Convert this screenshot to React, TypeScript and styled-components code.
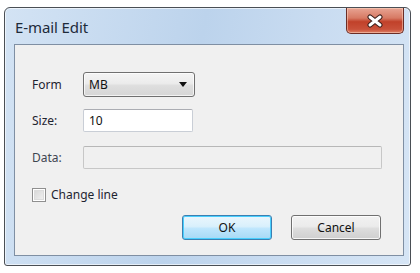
import React from "react";
import styled, { createGlobalStyle } from "styled-components";

const GlobalStyle = createGlobalStyle`
  body {
    margin: 0;
    background: #ffffff;
    font-family: "Noto Sans", "Open Sans", sans-serif;
  }
`;

const Window = styled.div`
  box-sizing: border-box;
  margin: 7px 0 0 4px;
  width: 407px;
  height: 259px;
  border: 1px solid #4a4f55;
  border-radius: 6px 6px 3px 3px;
  background: linear-gradient(100deg, #d3e3f4 0%, #bcd3ec 45%, #c9dcf1 70%, #d6e5f5 100%);
  box-shadow: inset 0 0 0 1px rgba(255, 255, 255, 0.6);
  display: flex;
  flex-direction: column;
  padding: 0 6px 9px 9px;
`;

const TitleBar = styled.div`
  height: 36px;
  display: flex;
  justify-content: space-between;
  align-items: flex-start;
`;

const Title = styled.span`
  align-self: center;
  margin: 2px 0 0 1px;
  font-size: 15px;
  color: #1e2b3a;
  letter-spacing: -0.1px;
`;

const CloseButton = styled.div`
  box-sizing: border-box;
  width: 58px;
  height: 26px;
  border: 1px solid #6b2d26;
  border-top: none;
  border-radius: 0 0 5px 5px;
  background: linear-gradient(#e8a493 0%, #d77a64 40%, #c1412a 55%, #c9513a 85%, #de8066 100%);
  box-shadow: inset 0 0 0 1px rgba(255, 220, 200, 0.5);
  display: flex;
  align-items: center;
  justify-content: center;
`;

const Client = styled.div`
  flex: 1;
  box-sizing: border-box;
  background: #f0f0f0;
  border: 1px solid #7f8fa3;
  padding: 27px 0 0 17px;
  display: flex;
  flex-direction: column;
`;

const FieldRow = styled.div<{ $top: number }>`
  display: flex;
  align-items: center;
  margin-top: ${(p) => p.$top}px;
`;

const Label = styled.span<{ $dim?: boolean }>`
  width: 51px;
  font-size: 12px;
  color: ${(p) => (p.$dim ? "#3f4650" : "#1e2430")};
`;

const Select = styled.div`
  box-sizing: border-box;
  width: 112px;
  height: 25px;
  border: 1px solid #707070;
  border-radius: 3px;
  background: linear-gradient(#f4f4f4 0%, #ececec 45%, #dedede 55%, #d6d6d6 100%);
  box-shadow: inset 0 0 0 1px rgba(255, 255, 255, 0.7);
  display: flex;
  align-items: center;
  justify-content: space-between;
  padding: 0 7px 0 5px;
  font-size: 12px;
  color: #111;
`;

const Arrow = styled.span`
  width: 0;
  height: 0;
  border-left: 4px solid transparent;
  border-right: 4px solid transparent;
  border-top: 5px solid #111;
`;

const Input = styled.div<{ $width: number; $disabled?: boolean }>`
  box-sizing: border-box;
  width: ${(p) => p.$width}px;
  height: 23px;
  border: 1px solid ${(p) => (p.$disabled ? "#c7c7c7" : "#c9ced6")};
  border-top-color: ${(p) => (p.$disabled ? "#b7b7b7" : "#abadb3")};
  background: ${(p) => (p.$disabled ? "#f0f0f0" : "#ffffff")};
  border-radius: 2px;
  display: flex;
  align-items: center;
  padding-left: 5px;
  font-size: 12px;
  color: #111;
`;

const CheckRow = styled.label`
  display: flex;
  align-items: center;
  gap: 5px;
  margin-top: 17px;
  font-size: 12px;
  color: #1e2430;
`;

const CheckBox = styled.span`
  box-sizing: border-box;
  width: 14px;
  height: 14px;
  border: 1px solid #8f8f8f;
  background: linear-gradient(135deg, #d4d4d4, #f4f4f4);
  box-shadow: inset 0 0 0 1px #ffffff, inset 0 0 0 2px #dcdcdc;
`;

const ButtonBar = styled.div`
  display: flex;
  gap: 19px;
  margin: 12px 0 0 150px;
`;

const Button = styled.div<{ $primary?: boolean }>`
  box-sizing: border-box;
  width: 90px;
  height: 25px;
  border-radius: 3px;
  border: 1px solid ${(p) => (p.$primary ? "#3c7fb1" : "#707070")};
  background: ${(p) =>
    p.$primary
      ? "linear-gradient(#eaf6fd 0%, #d9f0fc 45%, #bee6fd 55%, #a7d9f5 100%)"
      : "linear-gradient(#f2f2f2 0%, #ebebeb 45%, #dddddd 55%, #cfcfcf 100%)"};
  box-shadow: inset 0 0 0 1px ${(p) => (p.$primary ? "#48cffe" : "rgba(255,255,255,0.8)")};
  display: flex;
  align-items: center;
  justify-content: center;
  font-size: 12px;
  color: #111;
`;

const CloseGlyph = () => (
  <svg width="20" height="14" viewBox="0 0 20 14">
    <path d="M5 3 L15 11 M15 3 L5 11" stroke="#3a1e1a" strokeWidth="5" strokeLinecap="round" />
    <path d="M5 3 L15 11 M15 3 L5 11" stroke="#ffffff" strokeWidth="3" strokeLinecap="round" />
  </svg>
);

export default function App() {
  return (
    <>
      <GlobalStyle />
      <Window>
        <TitleBar>
          <Title>E-mail Edit</Title>
          <CloseButton>
            <CloseGlyph />
          </CloseButton>
        </TitleBar>
        <Client>
          <FieldRow $top={0}>
            <Label>Form</Label>
            <Select>
              MB
              <Arrow />
            </Select>
          </FieldRow>
          <FieldRow $top={12}>
            <Label>Size:</Label>
            <Input $width={110}>10</Input>
          </FieldRow>
          <FieldRow $top={14}>
            <Label $dim>Data:</Label>
            <Input $width={299} $disabled />
          </FieldRow>
          <CheckRow>
            <CheckBox />
            Change line
          </CheckRow>
          <ButtonBar>
            <Button $primary>OK</Button>
            <Button>Cancel</Button>
          </ButtonBar>
        </Client>
      </Window>
    </>
  );
}
